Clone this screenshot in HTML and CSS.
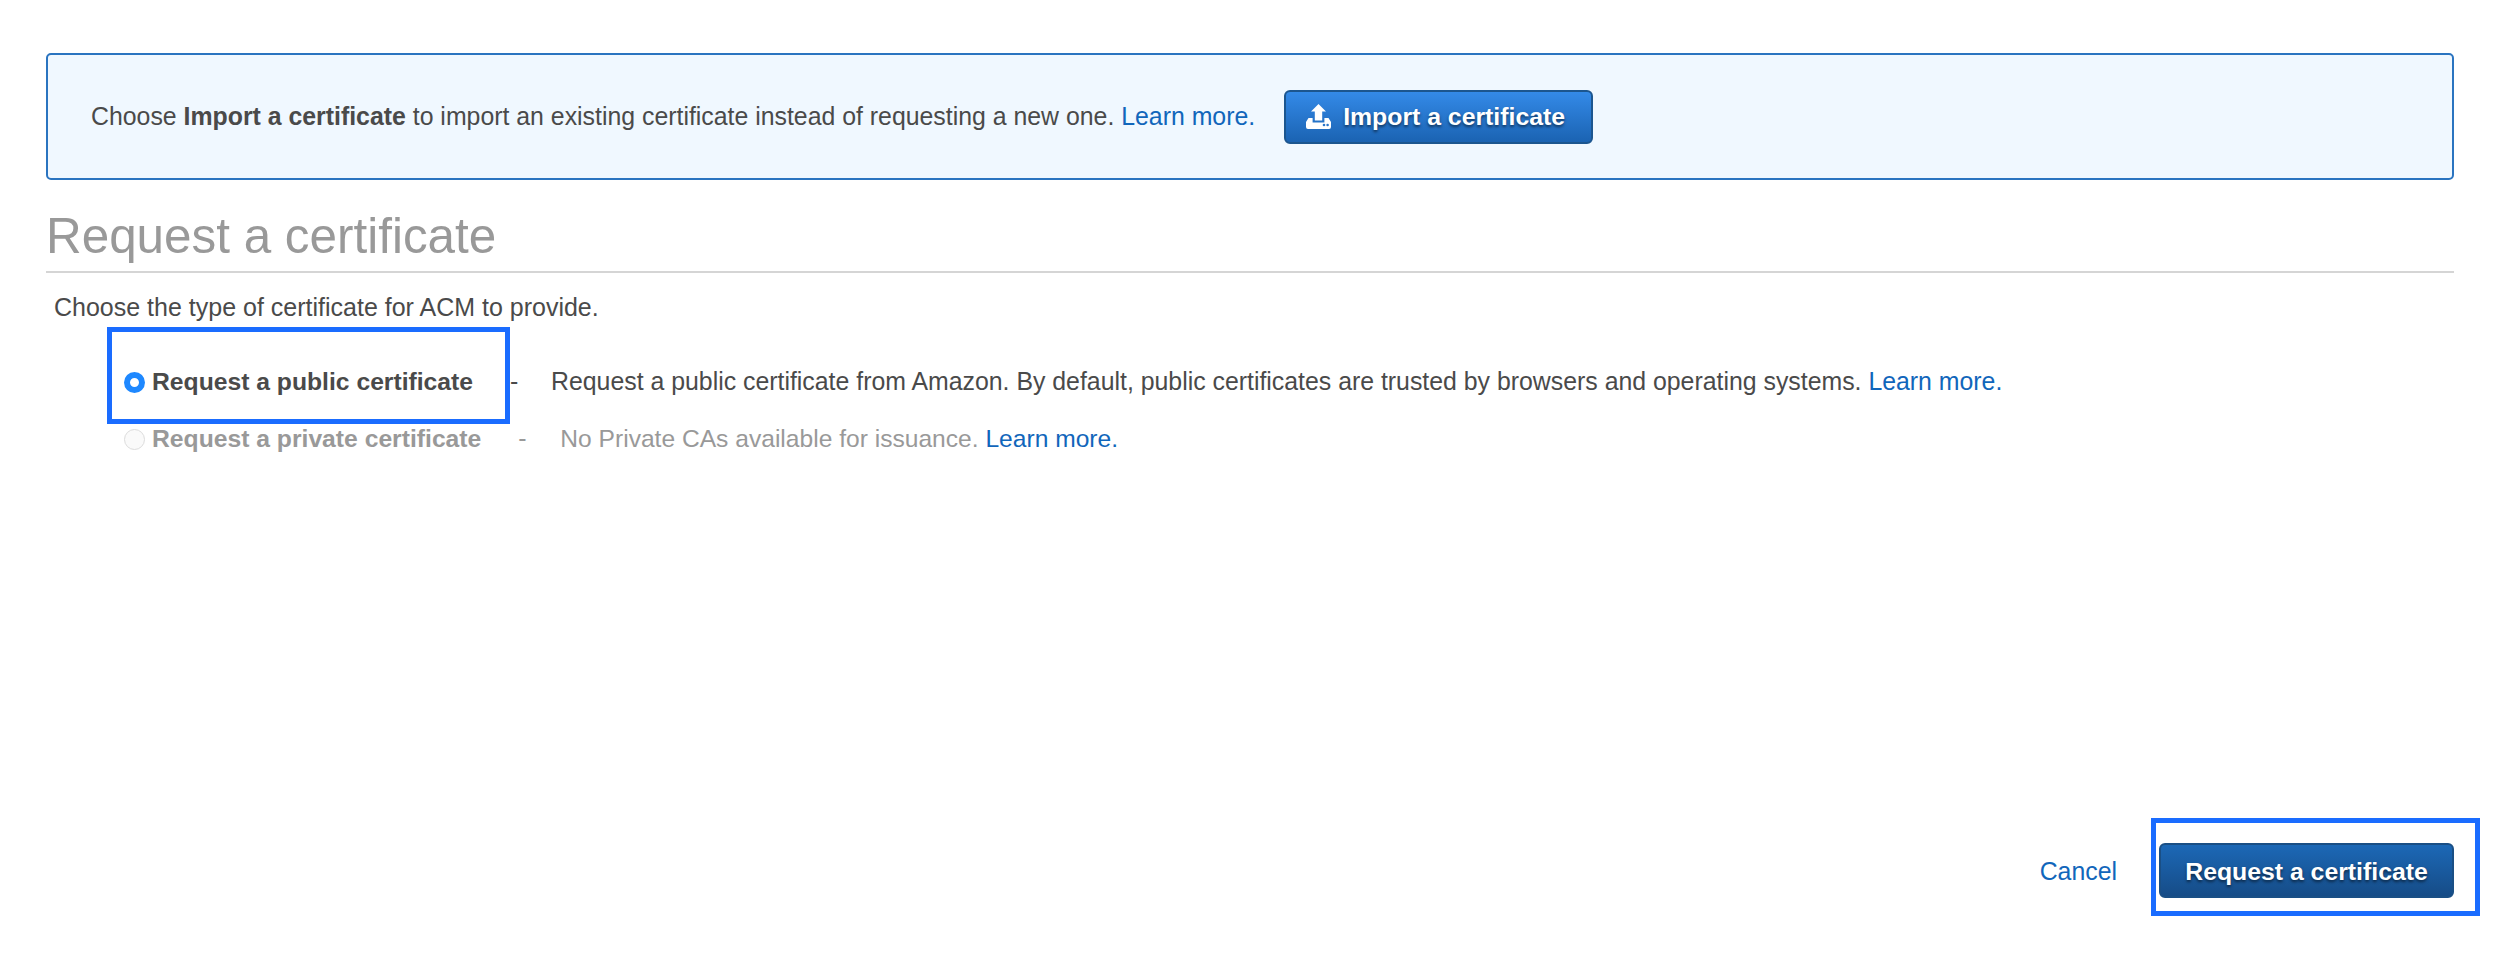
FILE: index.html
```html
<!DOCTYPE html>
<html lang="en">
<head>
<meta charset="utf-8">
<title>Request a certificate</title>
<link rel="stylesheet" href="styles.css">
</head>
<body>
<main class="page">
  <section class="notice">
    <p class="notice-text">Choose <strong>Import a certificate</strong> to import an existing certificate instead of requesting a new one. <a href="#">Learn more.</a></p>
    <button class="btn btn-import" type="button">
      <svg class="btn-icon" viewBox="0 0 25 25" aria-hidden="true">
        <path d="M12.5 0 L20 7.5 H16.2 V16.5 H8.8 V7.5 H5 Z" fill="#fff"/>
        <path d="M2.5 14 H6.6 V18.5 H18.4 V14 H22.5 L25 18 V23 A2 2 0 0 1 23 25 H2 A2 2 0 0 1 0 23 V18 Z" fill="#fff"/>
        <circle cx="18" cy="21" r="1.3" fill="#2a75c8"/>
        <circle cx="21.6" cy="21" r="1.3" fill="#2a75c8"/>
      </svg>
      Import a certificate
    </button>
  </section>

  <h1 class="title">Request a certificate</h1>
  <p class="intro">Choose the type of certificate for ACM to provide.</p>

  <div class="options">
    <div class="option">
      <label class="choice">
        <span class="radio radio-on"></span>
        <span>Request a public certificate</span>
        <span class="mark mark-option"></span>
      </label>
      <span class="dash">-</span>
      <span class="desc">Request a public certificate from Amazon. By default, public certificates are trusted by browsers and operating systems. <a href="#">Learn more.</a></span>
    </div>
    <div class="option option-off">
      <label class="choice">
        <span class="radio radio-off"></span>
        <span>Request a private certificate</span>
      </label>
      <span class="dash">-</span>
      <span class="desc">No Private CAs available for issuance. <a href="#">Learn more.</a></span>
    </div>
  </div>

  <footer class="actions">
    <a class="cancel" href="#">Cancel</a>
    <div class="submit-wrap">
      <button class="btn btn-submit" type="button">Request a certificate</button>
      <span class="mark mark-submit"></span>
    </div>
  </footer>
</main>
</body>
</html>
```

FILE: styles.css
```css
* { box-sizing: border-box; }
html, body { margin: 0; height: 100%; background: #fff; }
body {
  font-family: "Liberation Sans", Arial, sans-serif;
  font-size: 24.85px;
  color: #4a4a4a;
  overflow: hidden;
}
a { color: #1166bb; text-decoration: none; }
.page {
  height: 969px;
  padding: 53px 46px 0;
  display: flex;
  flex-direction: column;
}
.notice {
  height: 127px;
  display: flex;
  align-items: center;
  gap: 29px;
  padding-left: 43px;
  background: #f0f8ff;
  border: 2px solid #2a74c0;
  border-radius: 5px;
}
.notice-text { margin: 0; font-size: 24.85px; }
.btn {
  font-family: inherit;
  font-size: 24.8px;
  font-weight: 700;
  color: #fff;
  text-shadow: 0 2px 3px rgba(0, 0, 0, .55);
  border-radius: 6px;
  cursor: pointer;
}
.btn-import {
  width: 309px;
  height: 54px;
  display: flex;
  align-items: center;
  gap: 12px;
  padding: 1px 0 0 20px;
  background: linear-gradient(#348ae8, #1b63b2);
  border: 2px solid #1c568f;
}
.btn-icon { width: 25px; height: 25px; flex: none; margin-top: -2px; }
.title {
  margin: 26px 0 0;
  padding-bottom: 5px;
  border-bottom: 2px solid #d5d5d5;
  font-size: 49.4px;
  line-height: 60px;
  font-weight: 400;
  color: #999;
}
.intro { margin: 20px 0 0 8px; line-height: 28px; font-size: 25px; }
.options {
  margin: 47px 0 0 78px;
  display: flex;
  flex-direction: column;
  gap: 29px;
}
.option {
  display: flex;
  align-items: center;
  height: 28px;
}
.option-off, .option-off .dash, .option-off .desc { color: #999; }
.option-off .desc { font-size: 24.6px; margin-left: 34px; }
.choice {
  position: relative;
  display: flex;
  align-items: center;
  gap: 7px;
  font-weight: 700;
  font-size: 24.7px;
}
.radio {
  width: 21px;
  height: 21px;
  border-radius: 50%;
  flex: none;
}
.radio-on { background: #fff; border: 6.5px solid #1e88ff; }
.radio-off { background: #fafafa; border: 1px solid #dcdcdc; }
.dash { margin-left: 37px; width: 8px; }
.desc { margin-left: 33px; padding-bottom: 1px; }
.mark {
  position: absolute;
  border: 5px solid #1a6cff;
  pointer-events: none;
}
.mark-option { left: -17px; top: -41px; right: -37px; bottom: -28px; }
.actions {
  margin-top: auto;
  margin-bottom: 71px;
  display: flex;
  align-items: center;
  justify-content: flex-end;
  gap: 42px;
}
.cancel { line-height: 28px; padding-top: 2px; }
.submit-wrap { position: relative; display: flex; }
.btn-submit {
  width: 295px;
  height: 55px;
  padding: 2px 0 0;
  background: linear-gradient(#1c68b6, #164c87);
  border: 2px solid #1a4f85;
}
.mark-submit { left: -8px; top: -25px; right: -26px; bottom: -18px; }
```
